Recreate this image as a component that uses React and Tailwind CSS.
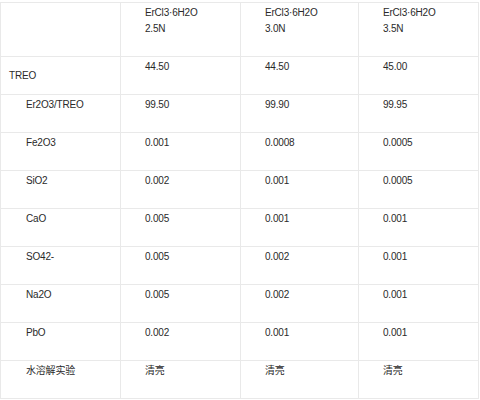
import React from 'react';

const cols = [
  { name: 'ErCl3·6H2O', grade: '2.5N' },
  { name: 'ErCl3·6H2O', grade: '3.0N' },
  { name: 'ErCl3·6H2O', grade: '3.5N' },
];

const rows = [
  { label: 'TREO', values: ['44.50', '44.50', '45.00'], top: true },
  { label: 'Er2O3/TREO', values: ['99.50', '99.90', '99.95'] },
  { label: 'Fe2O3', values: ['0.001', '0.0008', '0.0005'] },
  { label: 'SiO2', values: ['0.002', '0.001', '0.0005'] },
  { label: 'CaO', values: ['0.005', '0.001', '0.001'] },
  { label: 'SO42-', values: ['0.005', '0.002', '0.001'] },
  { label: 'Na2O', values: ['0.005', '0.002', '0.001'] },
  { label: 'PbO', values: ['0.002', '0.001', '0.001'] },
  { label: '水溶解实验', values: ['清亮', '清亮', '清亮'] },
];

const widths = ['w-[120px]', 'w-[120px]', 'w-[118px]', 'w-[120px]'];

export default function App() {
  return (
    <div className="min-h-[400px] bg-white pt-[2px] text-[10px] tracking-[-0.2px] leading-[16px] text-[#2a2a2a] font-['Liberation_Sans','Noto_Sans_CJK_SC',sans-serif]">
      <div className="w-[479px] border-t border-l border-[#e9e9e9]">
        <div className="flex h-[54px]">
          <div className={`${widths[0]} border-r border-b border-[#e9e9e9]`} />
          {cols.map((c, i) => (
            <div key={i} className={`${widths[i + 1]} border-r border-b border-[#e9e9e9] pt-[2px] pl-[24px]`}>
              <div>{c.name}</div>
              <div>{c.grade}</div>
            </div>
          ))}
        </div>
        {rows.map((r) => (
          <div key={r.label} className="flex h-[38px]">
            {r.top ? (
              <div className={`${widths[0]} border-r border-b border-[#e9e9e9] pl-[8px] flex items-center`}>
                {r.label}
              </div>
            ) : (
              <div className={`${widths[0]} border-r border-b border-[#e9e9e9] pl-[25px] pt-[2px]`}>
                {r.label}
              </div>
            )}
            {r.values.map((v, i) => (
              <div key={i} className={`${widths[i + 1]} border-r border-b border-[#e9e9e9] pl-[24px] pt-[2px]`}>
                {v}
              </div>
            ))}
          </div>
        ))}
      </div>
    </div>
  );
}
